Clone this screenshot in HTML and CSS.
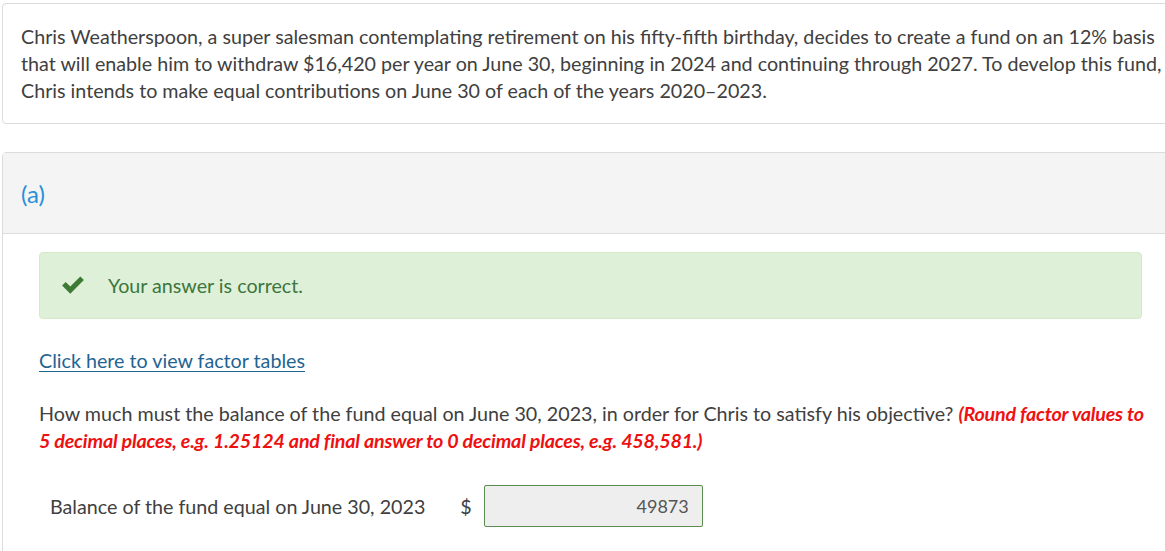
FILE: index.html
```html
<!DOCTYPE html>
<html lang="en">
<head>
<meta charset="UTF-8">
<title>Question</title>
<link rel="stylesheet" href="styles.css">
</head>
<body>

<div class="card intro">
    Chris Weatherspoon, a super salesman contemplating retirement on his fifty-fifth birthday, decides to create a fund on an 12% basis that will enable him to withdraw $16,420 per year on June 30, beginning in 2024 and continuing through 2027. To develop this fund, Chris intends to make equal contributions on June 30 of each of the years 2020–2023.
</div>

<div class="card part">
    <div class="part-head">(a)</div>
    <div class="part-body">
        <div class="alert">
            <svg class="check" width="24" height="19" viewBox="0 0 22 17">
                <path d="M1 8.5 L4.3 5.2 L8.5 9.4 L17.7 0.2 L21 3.5 L8.5 16 Z" fill="#3d7a36"/>
            </svg>
            <span>Your answer is correct.</span>
        </div>

        <a class="factor-link" href="#">Click here to view factor tables</a>

        <p class="question">
            How much must the balance of the fund equal on June 30, 2023, in order for Chris to satisfy his objective?
            <em class="note">(Round factor values to 5 decimal places, e.g. 1.25124 and final answer to 0 decimal places, e.g. 458,581.)</em>
        </p>

        <div class="answer-row">
            <span class="answer-label">Balance of the fund equal on June 30, 2023</span>
            <span class="dollar">$</span>
            <input class="answer" type="text" value="49873" readonly>
        </div>
    </div>
</div>

</body>
</html>
```

FILE: styles.css
```css
* { box-sizing: border-box; }
body {
    margin: 0;
    padding: 3px 0 0 2px;
    background: white;
    color: #404040;
    font-family: Lato, "Open Sans", sans-serif;
    font-size: 19.7px;
    overflow: hidden;
}
.card {
    width: calc(100% + 20px);
    border: 1px solid #dcdcdc;
    border-radius: 4px;
    background: white;
}
.intro {
    padding: 19px 20px 20px 18px;
    line-height: 27px;
    height: 121px;
}
.part {
    margin-top: 28px;
    height: 420px;
}
.part-head {
    background: #f4f4f4;
    border-bottom: 1px solid #dcdcdc;
    height: 81px;
    padding-left: 18px;
    display: flex;
    align-items: center;
    color: #2a8fd8;
    font-size: 24px;
}
.part-body {
    padding: 18px 20px 0 36px;
}
.alert {
    background: #dff0d8;
    border: 1px solid #d6e9c6;
    border-radius: 4px;
    height: 67px;
    display: flex;
    align-items: center;
    padding-left: 21px;
    color: #3c763d;
    width: 1103px;
}
.check { margin-right: 23px; }
.factor-link {
    display: inline-block;
    margin-top: 30px;
    color: #1f6491;
    text-decoration: underline;
    text-underline-offset: 3px;
    line-height: 24px;
}
.question {
    margin: 27px 0 0;
    line-height: 27px;
    width: 1110px;
}
.note {
    color: #ee1111;
    font-weight: bold;
    font-style: italic;
    letter-spacing: -0.2px;
}
.answer-row {
    display: flex;
    align-items: center;
    margin-top: 31px;
    padding-left: 11px;
}
.answer-label { margin-right: 35px; }
.dollar { margin-right: 12px; }
.answer {
    width: 219px;
    height: 42px;
    border: 1px solid #5b8c50;
    border-radius: 2px;
    background: #eeeeee;
    text-align: right;
    padding-right: 13px;
    font-family: Lato, sans-serif;
    font-size: 18px;
    color: #555;
}
```
